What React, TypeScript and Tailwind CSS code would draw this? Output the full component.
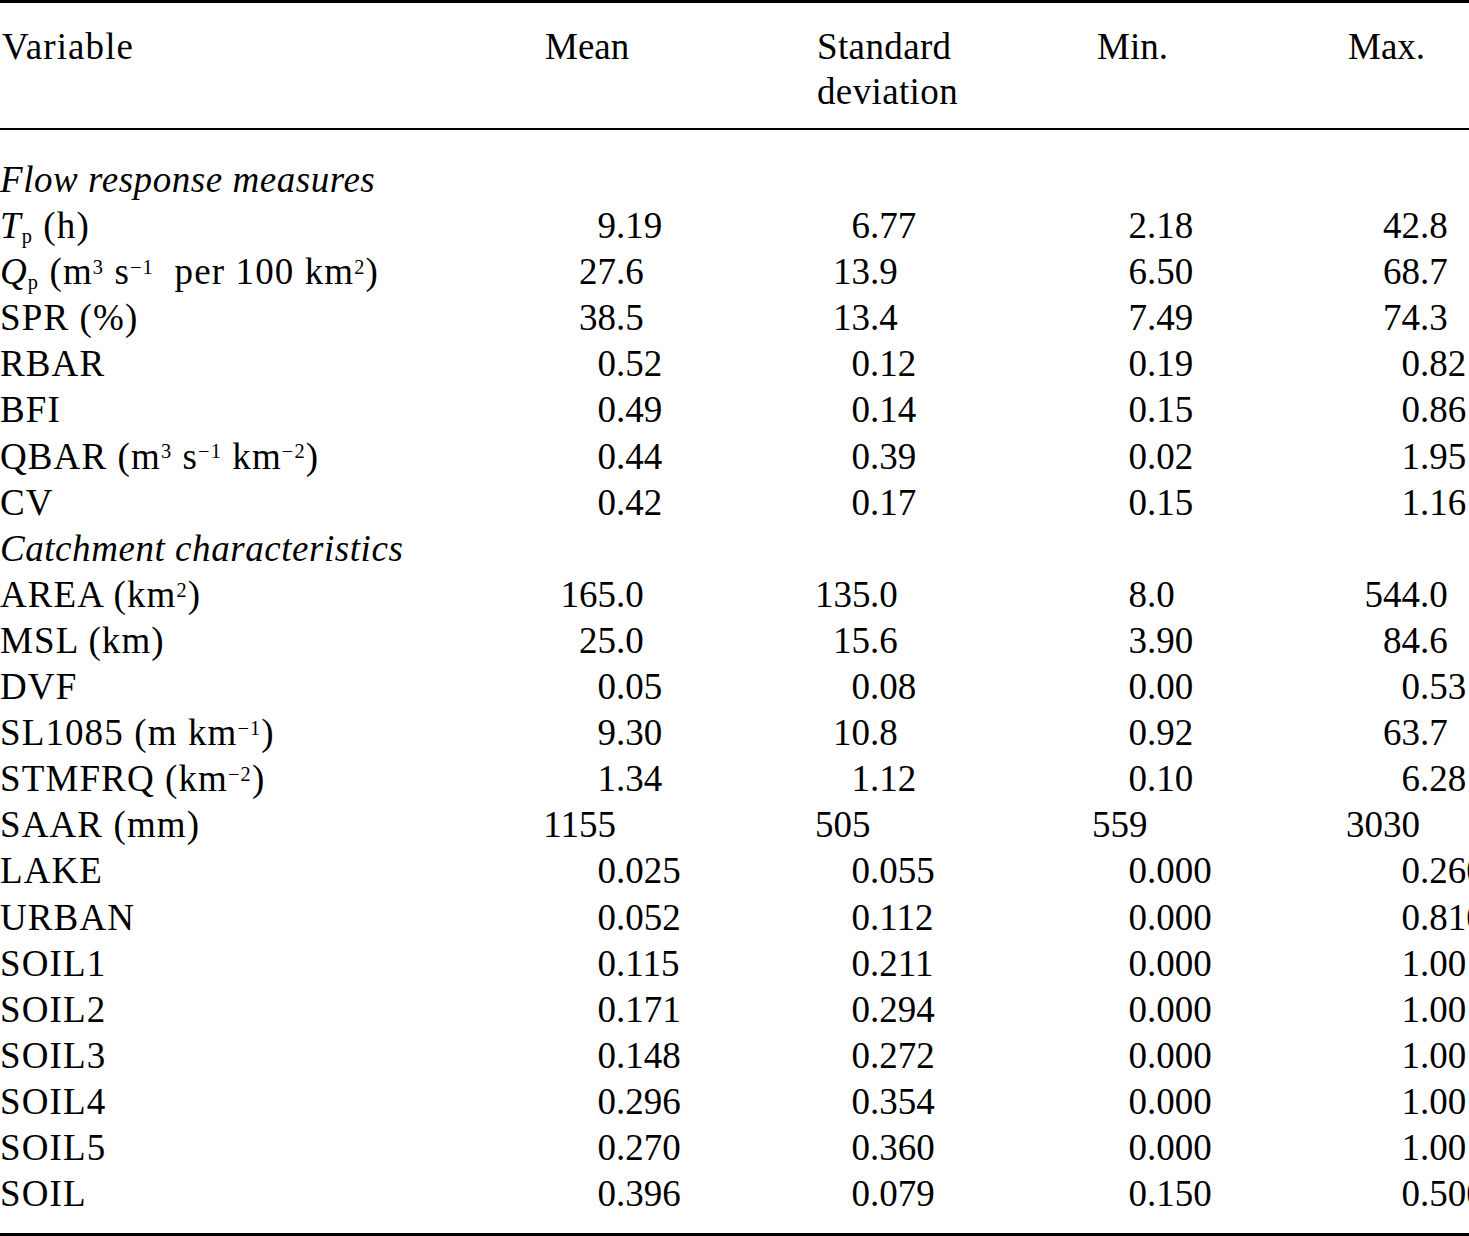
import React from "react";

type Row = {
  label: React.ReactNode;
  values: [string, string, string, string];
};

type Section = {
  title: string;
  rows: Row[];
};

const minus = "\u2212";

const sections: Section[] = [
  {
    title: "Flow response measures",
    rows: [
      {
        label: (
          <>
            <i>T</i>
            <sub className="text-[0.55em]">p</sub> (h)
          </>
        ),
        values: ["9.19", "6.77", "2.18", "42.8"],
      },
      {
        label: (
          <>
            <i>Q</i>
            <sub className="text-[0.55em]">p</sub> (m<sup className="text-[0.55em]">3</sup> s
            <sup className="text-[0.55em]">{minus}1</sup>&nbsp; per 100 km
            <sup className="text-[0.55em]">2</sup>)
          </>
        ),
        values: ["27.6", "13.9", "6.50", "68.7"],
      },
      { label: "SPR (%)", values: ["38.5", "13.4", "7.49", "74.3"] },
      { label: "RBAR", values: ["0.52", "0.12", "0.19", "0.82"] },
      { label: "BFI", values: ["0.49", "0.14", "0.15", "0.86"] },
      {
        label: (
          <>
            QBAR (m<sup className="text-[0.55em]">3</sup> s
            <sup className="text-[0.55em]">{minus}1</sup> km
            <sup className="text-[0.55em]">{minus}2</sup>)
          </>
        ),
        values: ["0.44", "0.39", "0.02", "1.95"],
      },
      { label: "CV", values: ["0.42", "0.17", "0.15", "1.16"] },
    ],
  },
  {
    title: "Catchment characteristics",
    rows: [
      {
        label: (
          <>
            AREA (km<sup className="text-[0.55em]">2</sup>)
          </>
        ),
        values: ["165.0", "135.0", "8.0", "544.0"],
      },
      { label: "MSL (km)", values: ["25.0", "15.6", "3.90", "84.6"] },
      { label: "DVF", values: ["0.05", "0.08", "0.00", "0.53"] },
      {
        label: (
          <>
            SL1085 (m km<sup className="text-[0.55em]">{minus}1</sup>)
          </>
        ),
        values: ["9.30", "10.8", "0.92", "63.7"],
      },
      {
        label: (
          <>
            STMFRQ (km<sup className="text-[0.55em]">{minus}2</sup>)
          </>
        ),
        values: ["1.34", "1.12", "0.10", "6.28"],
      },
      { label: "SAAR (mm)", values: ["1155", "505", "559", "3030"] },
      { label: "LAKE", values: ["0.025", "0.055", "0.000", "0.260"] },
      { label: "URBAN", values: ["0.052", "0.112", "0.000", "0.810"] },
      { label: "SOIL1", values: ["0.115", "0.211", "0.000", "1.00"] },
      { label: "SOIL2", values: ["0.171", "0.294", "0.000", "1.00"] },
      { label: "SOIL3", values: ["0.148", "0.272", "0.000", "1.00"] },
      { label: "SOIL4", values: ["0.296", "0.354", "0.000", "1.00"] },
      { label: "SOIL5", values: ["0.270", "0.360", "0.000", "1.00"] },
      { label: "SOIL", values: ["0.396", "0.079", "0.150", "0.500"] },
    ],
  },
];

// width of the integer box in each column, so the decimal points line up
const intWidths = ["w-[73px]", "w-[55px]", "w-[55px]", "w-[75px]"];

const Num = ({ v, col }: { v: string; col: number }) => {
  const [int, frac] = v.split(".");
  return (
    <div className="flex whitespace-nowrap">
      <span className={`${intWidths[col]} shrink-0 text-right`}>{int}</span>
      {frac !== undefined && <span>.{frac}</span>}
    </div>
  );
};

const gridCols = "grid grid-cols-[543px_272px_277px_253px_1fr]";

const App = () => {
  return (
    <div className="w-[1469px] h-[1236px] overflow-hidden bg-white text-black font-['Liberation_Serif',serif]">
      <div className="w-[1600px]">
        <div className="h-[3px] bg-black" />

        {/* Header */}
        <div className={`${gridCols} pt-[21px] pb-[14px] text-[37px] leading-[45px]`}>
          <div className="pl-[2px] tracking-[0.03em]">Variable</div>
          <div className="pl-[2px]">Mean</div>
          <div className="pl-[2px] tracking-[0.01em]">
            Standard
            <br />
            deviation
          </div>
          <div className="pl-[5px]">Min.</div>
          <div className="pl-[3px]">Max.</div>
        </div>

        <div className="h-[2px] bg-black" />

        {/* Body */}
        <div className="pt-[27px] pb-[16px] text-[37px] leading-[46.1px]">
          {sections.map((section) => (
            <div key={section.title}>
              <div className="italic tracking-[0.015em]">{section.title}</div>
              {section.rows.map((row, i) => (
                <div key={i} className={gridCols}>
                  <div className="whitespace-nowrap tracking-[0.03em]">{row.label}</div>
                  {row.values.map((v, c) => (
                    <Num key={c} v={v} col={c} />
                  ))}
                </div>
              ))}
            </div>
          ))}
        </div>

        <div className="h-[3px] bg-black" />
      </div>
    </div>
  );
};

export default App;
